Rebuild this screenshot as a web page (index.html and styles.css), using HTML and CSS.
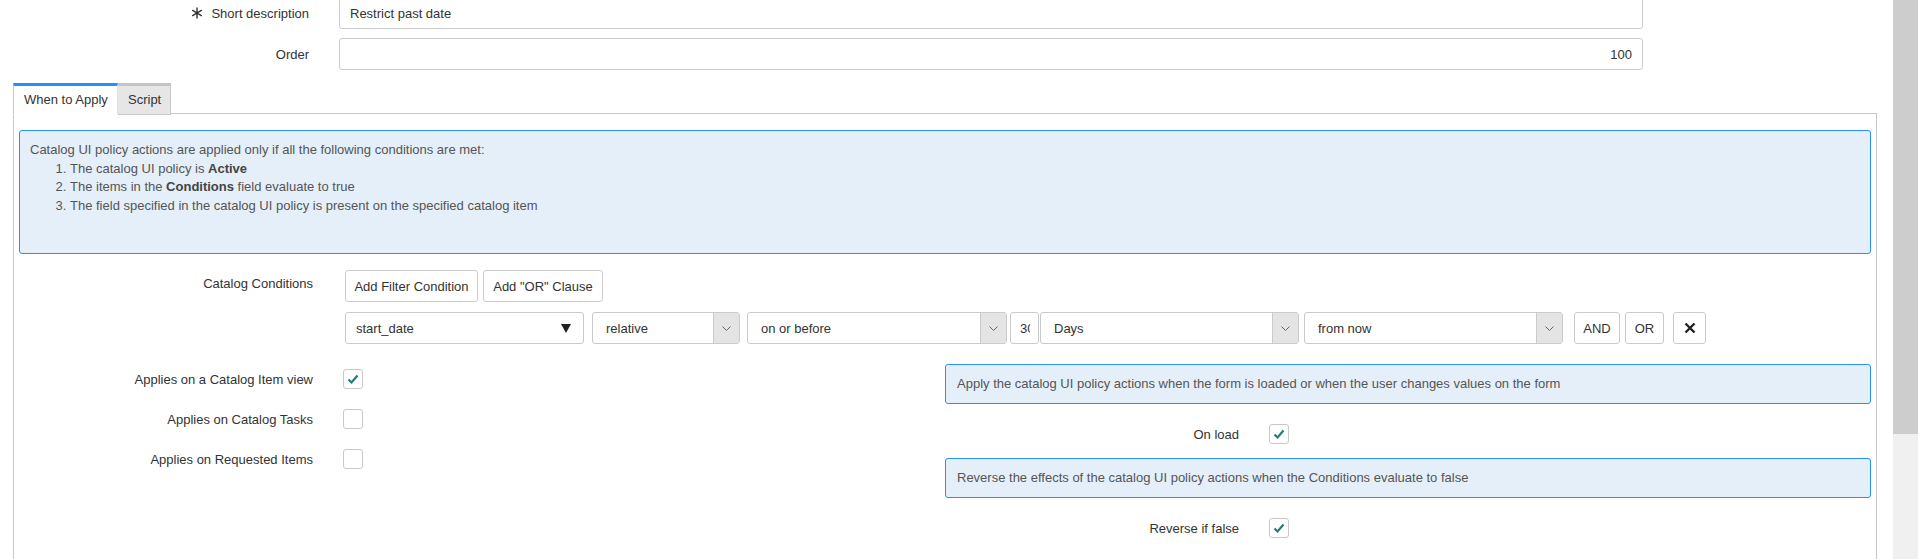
FILE: index.html
```html
<!DOCTYPE html>
<html lang="en">
<head>
<meta charset="UTF-8">
<title>Catalog UI Policy</title>
<link rel="stylesheet" href="styles.css">
</head>
<body>

<div class="page">
    <div class="main">
        <div class="field-row first">
            <label class="field-label">
                <svg class="req" viewBox="0 0 12 12" width="12" height="12"><path d="M6 0.5V11.5M1.2 3.2L10.8 8.8M1.2 8.8L10.8 3.2" stroke="#333" stroke-width="1.4" fill="none"/></svg>Short description
            </label>
            <input class="text-input" type="text" value="Restrict past date">
        </div>
        <div class="field-row">
            <label class="field-label">Order</label>
            <input class="text-input num" type="text" value="100">
        </div>

        <div class="tabs">
            <div class="tab active">When to Apply</div>
            <div class="tab">Script</div>
        </div>

        <div class="tab-panel">
            <div class="info-box big">
                Catalog UI policy actions are applied only if all the following conditions are met:
                <ol>
                    <li>The catalog UI policy is <b>Active</b></li>
                    <li>The items in the <b>Conditions</b> field evaluate to true</li>
                    <li>The field specified in the catalog UI policy is present on the specified catalog item</li>
                </ol>
            </div>

            <div class="cond-section">
                <div class="cond-label">Catalog Conditions</div>
                <div class="cond-body">
                    <div class="btn-row">
                        <button class="btn w-filter">Add Filter Condition</button>
                        <button class="btn w-or">Add "OR" Clause</button>
                    </div>
                    <div class="cond-row">
                        <div class="select ref w-field">
                            <span>start_date</span>
                            <svg class="tri" viewBox="0 0 10 9" width="10" height="9"><polygon points="0,0 10,0 5,9" fill="#222"/></svg>
                        </div>
                        <div class="select w-rel">
                            <span>relative</span>
                            <div class="arrow"><svg viewBox="0 0 9 5" width="9" height="5"><path d="M0.5 0.5L4.5 4.5L8.5 0.5" stroke="#666" fill="none"/></svg></div>
                        </div>
                        <div class="select w-op">
                            <span>on or before</span>
                            <div class="arrow"><svg viewBox="0 0 9 5" width="9" height="5"><path d="M0.5 0.5L4.5 4.5L8.5 0.5" stroke="#666" fill="none"/></svg></div>
                        </div>
                        <input class="num-box" type="text" value="30">
                        <div class="select w-unit">
                            <span>Days</span>
                            <div class="arrow"><svg viewBox="0 0 9 5" width="9" height="5"><path d="M0.5 0.5L4.5 4.5L8.5 0.5" stroke="#666" fill="none"/></svg></div>
                        </div>
                        <div class="select w-when">
                            <span>from now</span>
                            <div class="arrow"><svg viewBox="0 0 9 5" width="9" height="5"><path d="M0.5 0.5L4.5 4.5L8.5 0.5" stroke="#666" fill="none"/></svg></div>
                        </div>
                        <button class="btn small w-and">AND</button>
                        <button class="btn small w-orb">OR</button>
                        <button class="btn small w-del"><svg viewBox="0 0 12 12" width="12" height="12"><path d="M1.5 1.5L10.5 10.5M10.5 1.5L1.5 10.5" stroke="#222" stroke-width="2.4" fill="none"/></svg></button>
                    </div>
                </div>
            </div>

            <div class="split">
                <div class="col">
                    <div class="check-row">
                        <div class="check-label">Applies on a Catalog Item view</div>
                        <div class="checkbox"><svg viewBox="0 0 20 20" width="20" height="20"><path d="M5.5 10.5L8.5 13.5L14.5 6.5" stroke="#1f7f72" stroke-width="2.2" fill="none"/></svg></div>
                    </div>
                    <div class="check-row">
                        <div class="check-label">Applies on Catalog Tasks</div>
                        <div class="checkbox"></div>
                    </div>
                    <div class="check-row">
                        <div class="check-label">Applies on Requested Items</div>
                        <div class="checkbox"></div>
                    </div>
                </div>
                <div class="col right">
                    <div class="info-box">Apply the catalog UI policy actions when the form is loaded or when the user changes values on the form</div>
                    <div class="check-row">
                        <div class="check-label">On load</div>
                        <div class="checkbox"><svg viewBox="0 0 20 20" width="20" height="20"><path d="M5.5 10.5L8.5 13.5L14.5 6.5" stroke="#1f7f72" stroke-width="2.2" fill="none"/></svg></div>
                    </div>
                    <div class="info-box">Reverse the effects of the catalog UI policy actions when the Conditions evaluate to false</div>
                    <div class="check-row">
                        <div class="check-label">Reverse if false</div>
                        <div class="checkbox"><svg viewBox="0 0 20 20" width="20" height="20"><path d="M5.5 10.5L8.5 13.5L14.5 6.5" stroke="#1f7f72" stroke-width="2.2" fill="none"/></svg></div>
                    </div>
                </div>
            </div>
        </div>
    </div>

    <div class="scrollbar"><div class="thumb"></div></div>
</div>

</body>
</html>
```

FILE: styles.css
```css
body {
    margin: 0;
    font-family: "Liberation Sans", Arial, sans-serif;
    font-size: 13px;
    color: #333;
    background: #fff;
    overflow: hidden;
}
.page {
    display: flex;
    height: 559px;
    overflow: hidden;
}
.main {
    width: 1864px;
    margin-left: 13px;
    margin-right: 16px;
}
.scrollbar {
    width: 25px;
    background: #f0f0f0;
}
.thumb {
    height: 434px;
    background: #cdcdcd;
}

/* top fields */
.field-row {
    display: flex;
    align-items: center;
    height: 32px;
    margin-bottom: 9px;
    margin-left: -13px;
}
.field-row.first {
    margin-top: -3px;
}
.field-label {
    width: 309px;
    display: flex;
    justify-content: flex-end;
    align-items: center;
    margin-right: 30px;
}
.req {
    margin-right: 8px;
}
.text-input {
    width: 1304px;
    height: 32px;
    box-sizing: border-box;
    border: 1px solid #cbcbcb;
    border-radius: 3px;
    padding: 0 10px;
    font-family: inherit;
    font-size: 13px;
    color: #333;
    outline: none;
}
.text-input.num {
    text-align: right;
}

/* tabs */
.tabs {
    display: flex;
    margin-top: 13px;
    height: 31px;
    position: relative;
    z-index: 1;
    margin-bottom: -1px;
}
.tab {
    box-sizing: border-box;
    height: 32px;
    line-height: 27px;
    padding: 0 9px 0 10px;
    background: #e6e6e6;
    border-top: 3px solid #c4c4c4;
    border-right: 1px solid #c8c8c8;
    border-bottom: 1px solid #c8c8c8;
}
.tab.active {
    width: 105px;
    background: #fff;
    border-top-color: #278efc;
    border-left: 1px solid #c8c8c8;
    border-right: 1px solid #d6e4f5;
    border-bottom-color: #fff;
}
.tab-panel {
    border: 1px solid #c8c8c8;
    padding: 16px 5px 0 5px;
    height: 500px;
}

/* info boxes */
.info-box {
    background: #e5eff9;
    border: 1px solid #278efc;
    border-radius: 3px;
    padding: 10px 11px;
    line-height: 18px;
    color: #555;
}
.info-box.big {
    padding: 10px 10px 38px 10px;
    line-height: 18.5px;
}
.info-box ol {
    margin: 0;
    padding-left: 40px;
}
.info-box b {
    color: #444;
}

/* conditions */
.cond-section {
    display: flex;
    margin-top: 16px;
}
.cond-label {
    width: 294px;
    text-align: right;
    margin-right: 32px;
    padding-top: 5px;
    line-height: 18px;
}
.btn-row {
    display: flex;
    gap: 5px;
    margin-bottom: 10px;
}
.btn {
    height: 32px;
    box-sizing: border-box;
    background: #fff;
    border: 1px solid #cbcbcb;
    border-radius: 3px;
    font-family: inherit;
    font-size: 13px;
    color: #333;
    padding: 0;
}
.w-filter { width: 133px; }
.w-or { width: 120px; }
.cond-row {
    display: flex;
    align-items: center;
}
.select {
    height: 32px;
    box-sizing: border-box;
    border: 1px solid #cbcbcb;
    border-radius: 3px;
    display: flex;
    align-items: center;
    justify-content: space-between;
    background: #fff;
}
.select span {
    padding-left: 13px;
}
.select.ref span {
    padding-left: 10px;
}
.tri {
    margin-right: 12px;
}
.arrow {
    width: 25px;
    height: 30px;
    background: #e4e4e4;
    border-left: 1px solid #cbcbcb;
    display: flex;
    align-items: center;
    justify-content: center;
}
.w-field { width: 239px; }
.w-rel { width: 148px; margin-left: 8px; }
.w-op { width: 260px; margin-left: 7px; }
.num-box {
    width: 29px;
    height: 32px;
    box-sizing: border-box;
    margin-left: 3px;
    border: 1px solid #cbcbcb;
    border-radius: 3px;
    padding: 0 8px 0 9px;
    font-family: inherit;
    font-size: 13px;
    color: #333;
}
.w-unit { width: 259px; margin-left: 1px; }
.w-when { width: 259px; margin-left: 5px; }
.btn.small {
    display: flex;
    align-items: center;
    justify-content: center;
}
.w-and { width: 46px; margin-left: 11px; }
.w-orb { width: 39px; margin-left: 5px; }
.w-del { width: 33px; margin-left: 9px; }

/* checkbox area */
.split {
    display: grid;
    grid-template-columns: 926px 1fr;
    margin-top: 20px;
}
.check-row {
    display: flex;
    align-items: center;
    height: 30px;
    margin-bottom: 10px;
}
.check-label {
    width: 294px;
    text-align: right;
    margin-right: 30px;
}
.checkbox {
    width: 20px;
    height: 20px;
    box-sizing: border-box;
    border: 1px solid #c8c8c8;
    border-radius: 3px;
    display: flex;
    align-items: center;
    justify-content: center;
}
.checkbox svg {
    flex: none;
}
.right .check-row {
    margin: 15px 0 9px 0;
}
```
